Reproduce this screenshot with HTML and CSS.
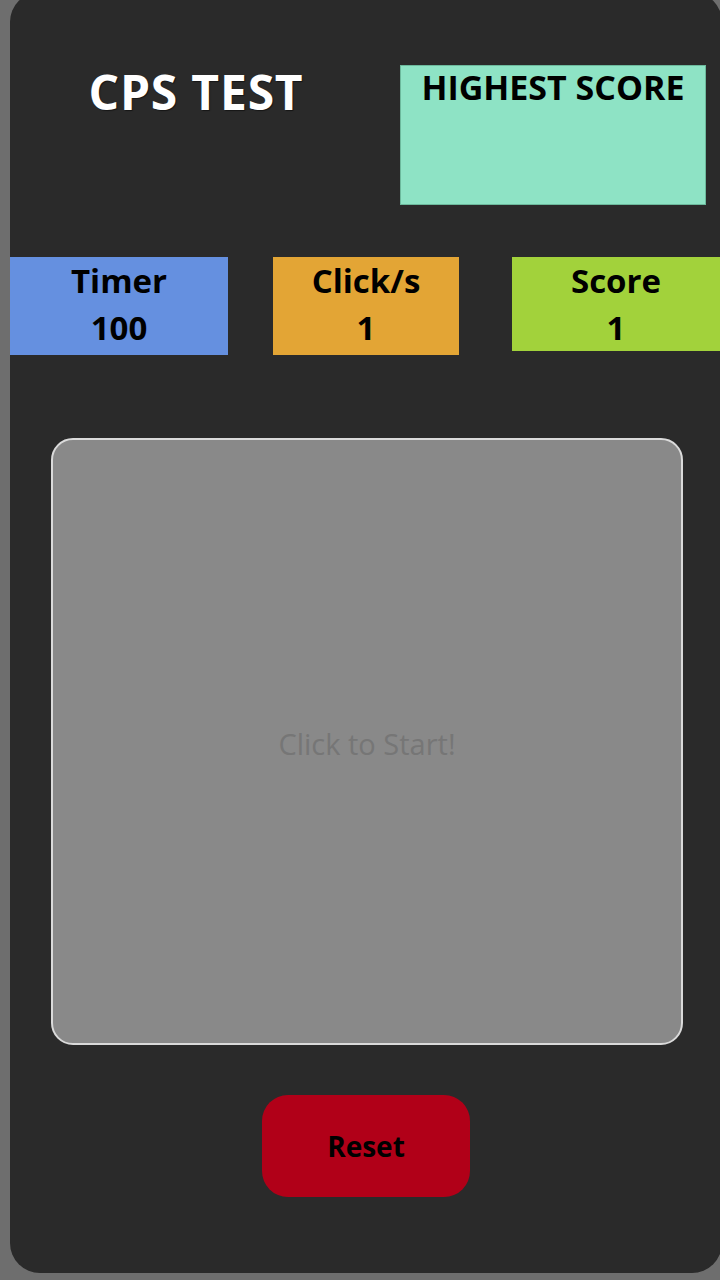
FILE: index.html
```
<!DOCTYPE html>
<html lang="en">
<head>
<meta charset="utf-8">
<title>CPS Test</title>
<link rel="stylesheet" href="styles.css">
</head>
<body>
<div class="panel">
  <header class="header">
    <h1 class="title">CPS TEST</h1>
    <div class="highest">HIGHEST SCORE</div>
  </header>
  <section class="stats">
    <div class="stat stat-timer"><div>Timer</div><div>100</div></div>
    <div class="stat stat-cps"><div>Click/s</div><div>1</div></div>
    <div class="stat stat-score"><div>Score</div><div>1</div></div>
  </section>
  <div class="click-area">Click to Start!</div>
  <button class="reset">Reset</button>
</div>
</body>
</html>
```
FILE: styles.css
```
* { box-sizing: border-box; }
html, body {
  margin: 0;
  padding: 0;
  height: 1280px;
  overflow: hidden;
  background: #6e6e6e;
  font-family: "Open Sans", "Noto Sans", sans-serif;
}
.panel {
  width: 712px;
  height: 1281px;
  margin: -8px 0 0 10px;
  padding-top: 73px;
  background: #2a2a2a;
  border-radius: 30px;
  display: flex;
  flex-direction: column;
  align-items: center;
}
.header {
  display: flex;
  align-items: flex-start;
  width: 100%;
  height: 140px;
}
.title {
  margin: 0;
  width: 372px;
  text-align: center;
  color: #ffffff;
  font-size: 48px;
  font-weight: 700;
  letter-spacing: 0.8px;
  line-height: 54px;
  text-shadow: 1px 1px 1px rgba(0,0,0,0.5);
}
.highest {
  margin-left: 18px;
  width: 306px;
  height: 140px;
  background: #8ee3c5;
  border: 1px solid #6cb99c;
  color: #000;
  font-size: 34px;
  font-weight: 700;
  line-height: 42px;
  text-align: center;
}
.stats {
  display: flex;
  align-items: flex-start;
  width: 100%;
  margin-top: 52px;
  gap: 45px;
}
.stat {
  color: #000;
  font-size: 33px;
  font-weight: 700;
  line-height: 47px;
  text-align: center;
}
.stat-timer { width: 218px; height: 98px; background: #6590e0; }
.stat-cps { width: 186px; height: 98px; background: #e3a535; }
.stat-score { width: 208px; height: 94px; background: #a2d23b; margin-left: 8px; }
.click-area {
  margin: 83px 0 0 2px;
  width: 632px;
  height: 607px;
  background: #898989;
  border: 2px solid #dadada;
  border-radius: 22px;
  display: flex;
  align-items: center;
  justify-content: center;
  color: #767676;
  font-size: 29px;
  padding-top: 3px;
}
.reset {
  margin-top: 50px;
  width: 208px;
  height: 102px;
  border: none;
  border-radius: 26px;
  background: #b10018;
  color: #000;
  font-family: "Open Sans", "Noto Sans", sans-serif;
  font-size: 28px;
  font-weight: 700;
  padding: 0;
}
```
